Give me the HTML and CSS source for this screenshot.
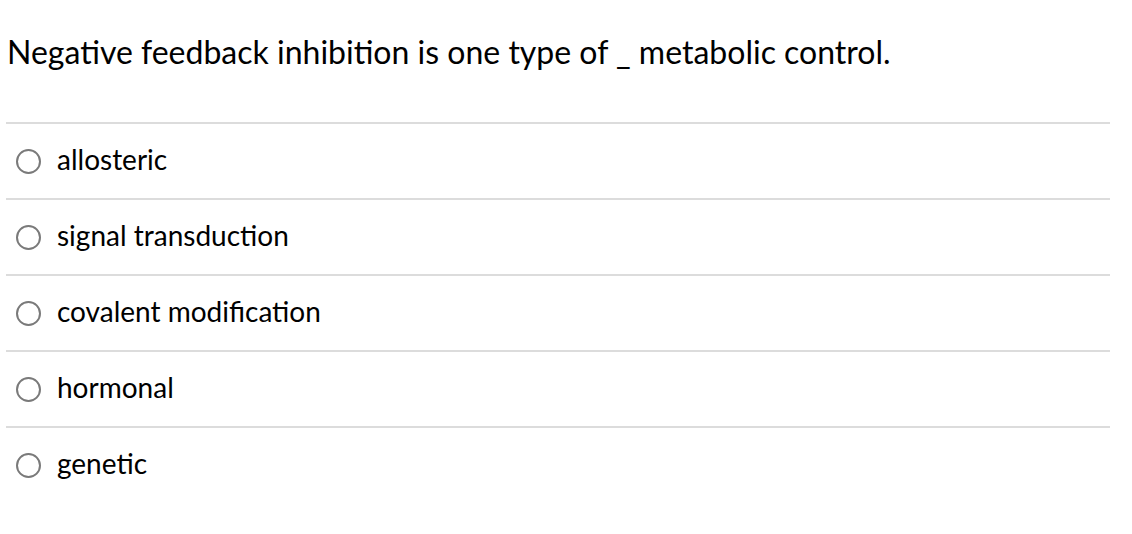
FILE: index.html
```html
<!DOCTYPE html>
<html>
<head>
<meta charset="utf-8">
<link rel="stylesheet" href="styles.css">
</head>
<body>
<div class="question">
  <p class="prompt">Negative feedback inhibition is one type of _ metabolic control.</p>
  <ul class="options">
    <li class="option"><span class="radio"></span><span class="label">allosteric</span></li>
    <li class="option"><span class="radio"></span><span class="label">signal transduction</span></li>
    <li class="option"><span class="radio"></span><span class="label">covalent modification</span></li>
    <li class="option"><span class="radio"></span><span class="label">hormonal</span></li>
    <li class="option"><span class="radio"></span><span class="label">genetic</span></li>
  </ul>
</div>
</body>
</html>
```
FILE: styles.css
```css
html, body {
  margin: 0;
  padding: 0;
  background: #fff;
}
body {
  font-family: Lato, "Open Sans", sans-serif;
  color: #000;
}
.question {
  padding: 0 22px 0 6px;
}
.prompt {
  margin: 0;
  padding: 30px 0 0 1px;
  font-size: 32px;
  line-height: 44px;
  height: 122px;
  box-sizing: border-box;
}
.options {
  list-style: none;
  margin: 0;
  padding: 0;
}
.option {
  display: flex;
  align-items: center;
  height: 76px;
  border-top: 2px solid #dcdcdc;
  box-sizing: border-box;
  padding-left: 10px;
}
.radio {
  width: 25px;
  height: 25px;
  border: 2px solid #7a7a7a;
  border-radius: 50%;
  box-sizing: border-box;
  flex: none;
}
.label {
  margin-left: 16px;
  margin-bottom: 5px;
  font-size: 28px;
}
```
